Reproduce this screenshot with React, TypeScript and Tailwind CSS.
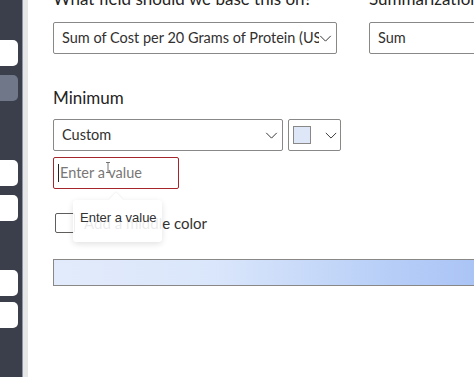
// Conditional formatting panel - minimum value editor with tooltip

const font = { fontFamily: 'Lato, "Noto Sans", sans-serif' }

function Chevron({ className = '' }: { className?: string }) {
  return (
    <svg viewBox="0 0 14 8" className={className} fill="none" stroke="currentColor" strokeWidth={1.1}>
      <path d="M1 1l6 6 6-6" />
    </svg>
  )
}

function Select({ value, width }: { value: string; width: string }) {
  return (
    <div
      className={`flex h-[32px] ${width} shrink-0 items-center overflow-hidden rounded-[2px] border border-[#8a8886] bg-white pl-[8px] pr-[4px]`}
    >
      <span className="flex-1 overflow-hidden whitespace-nowrap text-[14.5px] text-[#323130]">{value}</span>
      <Chevron className="h-[7px] w-[13px] shrink-0 text-[#323130]" />
    </div>
  )
}

const tabs = [
  { top: 'mt-[40px]', tone: 'bg-white' },
  { top: 'mt-[9px]', tone: 'bg-[#6f7788]' },
  { top: 'mt-[59px]', tone: 'bg-white' },
  { top: 'mt-[9px]', tone: 'bg-white' },
  { top: 'mt-[49px]', tone: 'bg-white' },
  { top: 'mt-[6px]', tone: 'bg-white' },
]

export default function App() {
  return (
    <div className="flex h-[377px] w-[474px] overflow-hidden bg-white" style={font}>
      {/* Side rail */}
      <aside className="flex w-[22px] shrink-0 flex-col bg-[#3a3f4b]">
        {tabs.map((t, i) => (
          <div key={i} className={`${t.top} h-[26px] w-[18px] rounded-r-[5px] ${t.tone}`} />
        ))}
      </aside>
      <div className="w-[6px] shrink-0 border-l border-[#8e97a6] bg-[#e6e6e6]" />

      {/* Panel */}
      <main className="relative min-w-0 flex-1 pl-[25px]">
        <div className="-mt-[12px] flex w-[620px] gap-[32px]">
          <div className="flex w-[284px] flex-col">
            <span className="whitespace-nowrap text-[17px] leading-[22px] text-[#252423]">
              What field should we base this on?
            </span>
            <div className="mt-[12px]">
              <Select value="Sum of Cost per 20 Grams of Protein (USD)" width="w-[284px]" />
            </div>
          </div>
          <div className="flex w-[200px] flex-col">
            <span className="whitespace-nowrap text-[17px] leading-[22px] text-[#252423]">Summarization</span>
            <div className="mt-[12px]">
              <Select value="Sum" width="w-[200px]" />
            </div>
          </div>
        </div>

        <div className="mt-[33px] text-[17px] leading-[22px] text-[#252423]">Minimum</div>

        <div className="mt-[10px] flex gap-[5px]">
          <Select value="Custom" width="w-[230px]" />
          <div className="flex h-[32px] w-[53px] items-center gap-[14px] rounded-[2px] border border-[#8a8886] pl-[4px]">
            <div className="h-[18px] w-[18px] border border-[#8a8886] bg-[#dde7f7]" />
            <Chevron className="h-[7px] w-[12px] text-[#323130]" />
          </div>
        </div>

        <div className="mt-[6px] flex h-[32px] w-[126px] items-center rounded-[2px] border border-[#a4262c] pl-[4px]">
          <span className="h-[18px] w-px bg-[#252423]" />
          <span className="ml-px text-[14.5px] text-[#797775]">Enter a value</span>
        </div>

        <div className="mt-[23px] flex items-center gap-[9px] pl-[2px]">
          <div className="h-[20px] w-[20px] rounded-[2px] border border-[#605e5c]" />
          <span className="text-[15px] text-[#323130]">Add a middle color</span>
        </div>

        <div className="mt-[24px] h-[27px] w-[460px] border border-[#8a8886] bg-[linear-gradient(to_right,#e2ebfb_0%,#dae6fb_35%,#c8daf9_55%,#b5cdf7_75%,#a5c0f5_100%)]" />

        {/* I-beam cursor */}
        <svg
          className="absolute left-[77px] top-[162px] h-[11px] w-[6px] text-[#555]"
          viewBox="0 0 6 11"
          fill="none"
          stroke="currentColor"
          strokeWidth={0.8}
        >
          <path d="M1 0.5h4M3 0.5v10M1 10.5h4" />
        </svg>

        {/* Tooltip */}
        <div className="absolute left-[45px] top-[200px] h-[42px] w-[89px] rounded-[4px] bg-white/90 shadow-[0_2px_6px_rgba(0,0,0,0.12)]">
          <div className="absolute -top-[5px] left-[38px] h-[10px] w-[10px] rotate-45 bg-white/90 shadow-[-1px_-1px_2px_rgba(0,0,0,0.06)]" />
          <div
            className="relative pl-[7px] pt-[10px] text-[13px] leading-[16px] text-[#333]"
            style={{ fontFamily: '"Liberation Sans", Arial, sans-serif' }}
          >
            Enter a value
          </div>
        </div>
      </main>
    </div>
  )
}
